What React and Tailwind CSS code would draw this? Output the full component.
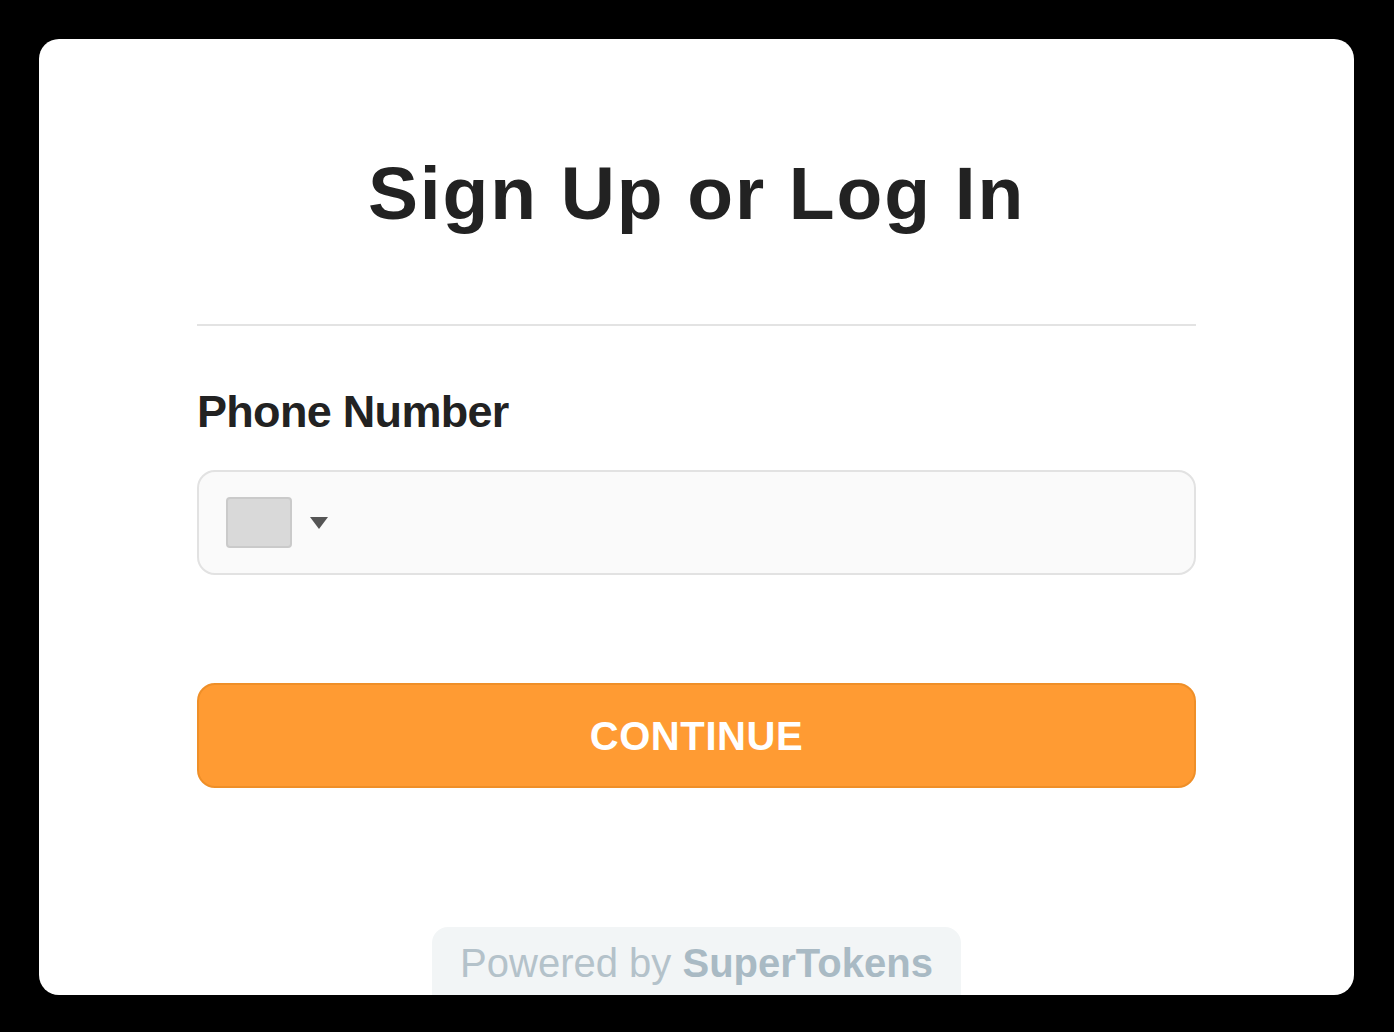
export default function App() {
  return (
    <div className="w-[1394px] h-[1032px] bg-black pt-[39px] pl-[39px] overflow-hidden" style={{ fontFamily: '"Liberation Sans", Arial, sans-serif' }}>
      <div className="w-[1315px] h-[956px] bg-white rounded-[20px] overflow-hidden px-[158px] pt-[117px] flex flex-col">
        <h1 className="shrink-0 text-[75px] leading-[75px] font-bold text-[#222222] text-center tracking-[1.9px]">Sign Up or Log In</h1>
        <div className="shrink-0 mt-[93px] h-[2px] bg-[#e3e3e3]" />
        <div className="shrink-0 mt-[63px] text-[45px] leading-[46px] font-bold text-[#222222] tracking-[-0.7px]">Phone Number</div>
        <div className="shrink-0 mt-[35px] h-[105px] rounded-[18px] border-2 border-[#e2e2e2] bg-[#fafafa] flex items-center pl-[27px]">
          <div className="w-[66px] h-[51px] bg-[#d9d9d9] border-2 border-[#cacaca] rounded-[4px]" />
          <svg className="ml-[18px]" width="18" height="12" viewBox="0 0 18 12">
            <polygon points="0,0 18,0 9,12" fill="#555555" />
          </svg>
        </div>
        <button className="shrink-0 mt-[108px] h-[105px] rounded-[18px] border-2 border-[#ef8f28] bg-[#ff9b33] text-white text-[40px] tracking-[0.6px] font-bold flex items-center justify-center">CONTINUE</button>
        <div className="shrink-0 mt-[139px] self-center w-[529px] h-[90px] bg-[#f2f5f6] rounded-[16px] flex justify-center pt-[10px]">
          <span className="text-[40px] leading-[52px] text-[#b4c2ca]">Powered by <span className="font-bold text-[#a9bac4]">SuperTokens</span></span>
        </div>
      </div>
    </div>
  );
}
